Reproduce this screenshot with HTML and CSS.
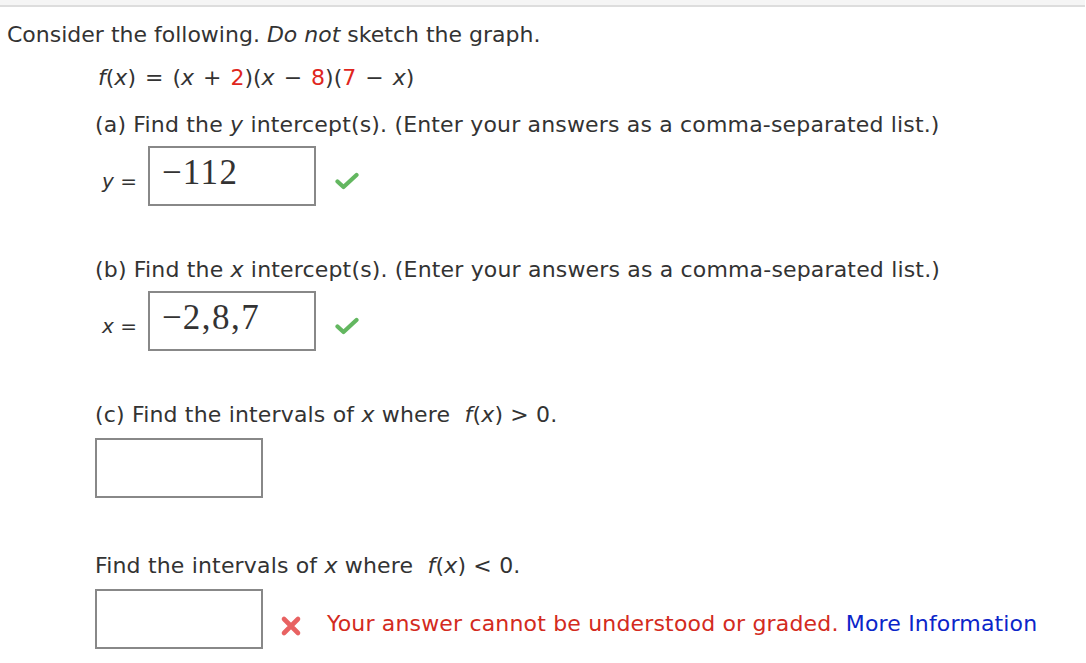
FILE: index.html
```html
<!DOCTYPE html>
<html>
<head>
<meta charset="utf-8">
<link rel="stylesheet" href="styles.css">
</head>
<body>
<div class="topbar"></div>
<div class="content">
  <p class="intro">Consider the following. <i>Do not</i> sketch the graph.</p>
  <div class="part">
    <p class="fx"><i>f</i>(<i>x</i>) <span class="op">=</span> (<i>x</i> <span class="op">+</span> <span class="red">2</span>)(<i>x</i> <span class="op">&minus;</span> <span class="red">8</span>)(<span class="red">7</span> <span class="op">&minus;</span> <i>x</i>)</p>
    <p class="q q-a">(a) Find the <i>y</i> intercept(s). (Enter your answers as a comma-separated list.)</p>
    <div class="answer-row">
      <span class="label"><i>y</i> =</span>
      <div class="box"><span class="val"><span class="minus">&minus;</span>112</span></div>
      <svg class="check" width="24" height="18" viewBox="0 0 24 18"><path d="M2.5 9.5 L8.5 15 L21.5 3" fill="none" stroke="#63b760" stroke-width="4.2" stroke-linecap="round" stroke-linejoin="round"/></svg>
    </div>
    <p class="q q-b">(b) Find the <i>x</i> intercept(s). (Enter your answers as a comma-separated list.)</p>
    <div class="answer-row">
      <span class="label"><i>x</i> =</span>
      <div class="box"><span class="val"><span class="minus">&minus;</span>2,8,7</span></div>
      <svg class="check" width="24" height="18" viewBox="0 0 24 18"><path d="M2.5 9.5 L8.5 15 L21.5 3" fill="none" stroke="#63b760" stroke-width="4.2" stroke-linecap="round" stroke-linejoin="round"/></svg>
    </div>
    <p class="q q-c">(c) Find the intervals of <i>x</i> where &nbsp;<i>f</i>(<i>x</i>) &gt; 0.</p>
    <div class="answer-row">
      <div class="box"></div>
    </div>
    <p class="q q-d">Find the intervals of <i>x</i> where &nbsp;<i>f</i>(<i>x</i>) &lt; 0.</p>
    <div class="answer-row">
      <div class="box"></div>
      <svg class="cross" width="22" height="22" viewBox="0 0 22 22"><path d="M4 4 L18 18 M18 4 L4 18" fill="none" stroke="#e86262" stroke-width="4.6" stroke-linecap="round"/></svg>
      <span class="error">Your answer cannot be understood or graded. <a class="more" href="#">More Information</a></span>
    </div>
  </div>
</div>
</body>
</html>
```
FILE: styles.css
```css
html, body {
  margin: 0;
  padding: 0;
  background: #ffffff;
}
body {
  font-family: "DejaVu Sans", Verdana, sans-serif;
  font-size: 22px;
  color: #333333;
}
.topbar {
  height: 5px;
  background: #f5f5f5;
  border-bottom: 2px solid #dddddd;
  margin-right: 1px;
}
.content {
  padding-left: 7px;
}
p {
  margin: 0;
  line-height: 24px;
  white-space: nowrap;
}
.intro {
  margin-top: 16px;
}
.part {
  padding-left: 88px;
}
.fx {
  margin-top: 19px;
  padding-left: 3px;
}
.red {
  color: #e0261d;
}
.op {
  padding: 0 2px;
}
.q {
  letter-spacing: 0.17px;
}
.q-a {
  margin-top: 23px;
}
.q-b, .q-c {
  margin-top: 52px;
}
.q-d {
  margin-top: 56px;
}
.answer-row {
  display: flex;
  align-items: center;
  margin-top: 9px;
  height: 60px;
}
.q-c + .answer-row, .q-d + .answer-row {
  margin-top: 11px;
}
.label {
  width: 53px;
  text-align: right;
  padding-right: 11px;
  box-sizing: border-box;
  font-size: 20px;
  padding-top: 9px;
}
.box {
  width: 168px;
  height: 60px;
  box-sizing: border-box;
  border: 2px solid #888888;
  background: #fff;
  display: flex;
  align-items: center;
}
.val {
  font-family: "Liberation Serif", "Times New Roman", serif;
  font-size: 35px;
  letter-spacing: 1.5px;
  color: #333;
  padding-left: 12px;
  margin-top: -6px;
}
.minus {
  letter-spacing: 0;
  padding-right: 1px;
}
.check {
  margin-left: 19px;
  margin-top: 9px;
}
.cross {
  margin-left: 17px;
  margin-top: 14px;
}
.error {
  margin-left: 25px;
  margin-top: 9px;
  color: #d32a20;
  white-space: nowrap;
  letter-spacing: 0.17px;
}
.more {
  color: #0b25c9;
  text-decoration: none;
}
```
